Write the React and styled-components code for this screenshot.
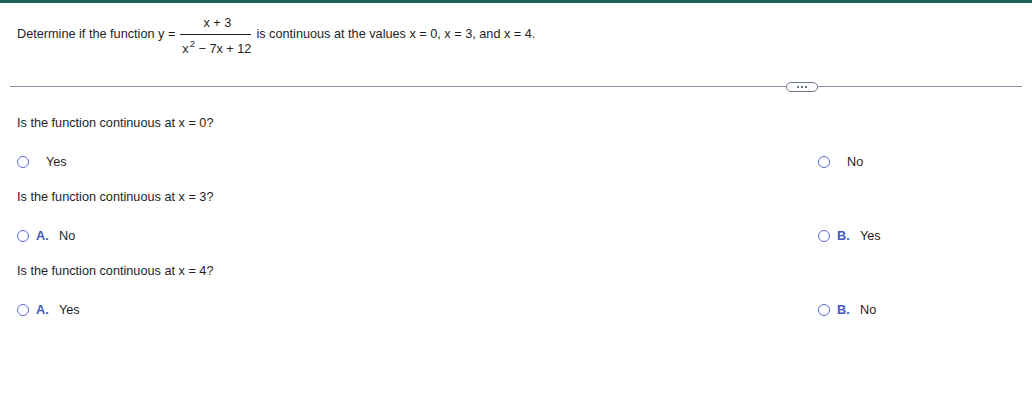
import React from 'react';
import styled, { createGlobalStyle } from 'styled-components';

const Global = createGlobalStyle`
  html, body { margin: 0; padding: 0; background: #fff; }
  body { font-family: "Liberation Sans", Arial, sans-serif; font-size: 12.7px; color: #1e1e1e; }
`;

const Page = styled.div`
  width: 1032px;
  height: 408px;
  border-top: 3px solid #1d5e59;
  box-sizing: border-box;
`;

const Prompt = styled.div`
  display: flex;
  align-items: center;
  padding: 8px 0 0 17px;
`;

const Fraction = styled.span`
  display: inline-flex;
  flex-direction: column;
  align-items: center;
  margin: 0 5px 0 5px;
`;

const Num = styled.span`
  padding: 5px 0 3px 3px;
  line-height: 15px;
`;

const Den = styled.span`
  border-top: 1px solid #222;
  padding: 7px 0 0 2px;
  line-height: 15px;
`;

const Sup = styled.sup`
  font-size: 9.5px;
  vertical-align: 6px;
  line-height: 0;
  margin-left: 1px;
`;

const Divider = styled.div`
  display: flex;
  align-items: center;
  margin: 24px 10px 0;
  height: 11px;
`;

const Rule = styled.div`
  flex: ${p => p.$grow};
  height: 1px;
  background: #8a93a3;
`;

const Pill = styled.div`
  width: 30px;
  height: 8px;
  border: 1px solid #6c778a;
  border-radius: 5px;
  display: flex;
  align-items: center;
  justify-content: center;
  gap: 2px;
`;

const Dot = styled.span`
  width: 2px;
  height: 2px;
  background: #6c778a;
`;

const Body = styled.div`
  padding: 24px 0 0 17px;
`;

const Question = styled.div`
  height: 14px;
  line-height: 14px;
  margin-bottom: 25px;
`;

const Options = styled.div`
  display: grid;
  grid-template-columns: 801px 1fr;
  height: 14px;
  margin-bottom: 21px;
`;

const Option = styled.label`
  display: flex;
  align-items: center;
  height: 14px;
`;

const Radio = styled.span`
  width: 10px;
  height: 10px;
  border: 1.5px solid #5a6dd8;
  border-radius: 50%;
  margin-right: ${p => (p.$plain ? '17px' : '7px')};
`;

const Letter = styled.span`
  color: #4457c4;
  font-weight: bold;
  width: 23px;
`;

function Choice({ letter, text }) {
  return (
    <Option>
      <Radio $plain={!letter} />
      {letter && <Letter>{letter}.</Letter>}
      <span>{text}</span>
    </Option>
  );
}

const questions = [
  { q: 'Is the function continuous at x = 0?', a: [{ text: 'Yes' }, { text: 'No' }] },
  { q: 'Is the function continuous at x = 3?', a: [{ letter: 'A', text: 'No' }, { letter: 'B', text: 'Yes' }] },
  { q: 'Is the function continuous at x = 4?', a: [{ letter: 'A', text: 'Yes' }, { letter: 'B', text: 'No' }] },
];

export default function App() {
  return (
    <>
      <Global />
      <Page>
        <Prompt>
          <span>Determine if the function y =</span>
          <Fraction>
            <Num>x + 3</Num>
            <Den>x<Sup>2</Sup> − 7x + 12</Den>
          </Fraction>
          <span>is continuous at the values x = 0, x = 3, and x = 4.</span>
        </Prompt>
        <Divider>
          <Rule $grow={777} />
          <Pill><Dot /><Dot /><Dot /></Pill>
          <Rule $grow={204} />
        </Divider>
        <Body>
          {questions.map((item, i) => (
            <div key={i}>
              <Question>{item.q}</Question>
              <Options>
                {item.a.map((c, j) => <Choice key={j} {...c} />)}
              </Options>
            </div>
          ))}
        </Body>
      </Page>
    </>
  );
}
